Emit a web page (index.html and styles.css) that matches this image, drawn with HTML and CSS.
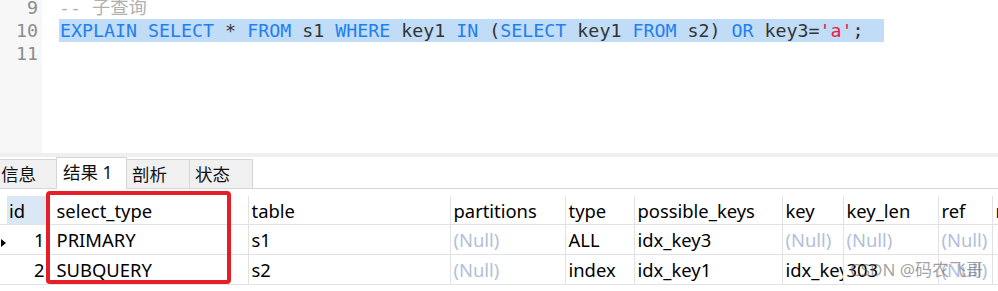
FILE: index.html
```html
<!DOCTYPE html>
<html lang="zh">
<head>
  <meta charset="UTF-8">
  <meta name="viewport" content="width=device-width, initial-scale=1.0">
  <title>查询编辑器</title>
  <link rel="stylesheet" href="styles.css">
</head>
<body>
  <div class="editor">
    <div class="gutter">
      <div class="ln">9</div>
      <div class="ln">10</div>
      <div class="ln">11</div>
    </div>
    <div class="code">
      <div class="line"><span class="cm">-- 子查询</span></div>
      <div class="line"><span class="sel"><span class="kw">EXPLAIN</span> <span class="kw">SELECT</span> * <span class="kw">FROM</span> s1 <span class="kw">WHERE</span> key1 <span class="kw">IN</span> (<span class="kw">SELECT</span> key1 <span class="kw">FROM</span> s2) <span class="kw">OR</span> key3=<span class="str">'a'</span>;</span></div>
      <div class="line"></div>
    </div>
  </div>
  <div class="band"></div>

  <div class="results">
    <div class="tabs">
      <div class="tab first">信息</div>
      <div class="tab active">结果 1</div>
      <div class="tab">剖析</div>
      <div class="tab">状态</div>
    </div>

    <table class="grid">
      <colgroup>
        <col style="width:7px"><col style="width:39px"><col style="width:202px"><col style="width:202px">
        <col style="width:115px"><col style="width:69px"><col style="width:148px"><col style="width:61px">
        <col style="width:95px"><col style="width:54px"><col style="width:100px">
      </colgroup>
      <thead>
        <tr>
          <th class="ind"></th>
          <th class="idh">id</th>
          <th class="st">select_type</th>
          <th>table</th>
          <th>partitions</th>
          <th>type</th>
          <th>possible_keys</th>
          <th>key</th>
          <th>key_len</th>
          <th>ref</th>
          <th>rows</th>
        </tr>
      </thead>
      <tbody>
        <tr>
          <td class="ind"><svg width="5" height="8" viewBox="0 0 5 8"><path d="M0 0 L5 4 L0 8 Z" fill="#000"/></svg></td>
          <td class="num">1</td>
          <td class="st">PRIMARY</td>
          <td>s1</td>
          <td class="null">(Null)</td>
          <td>ALL</td>
          <td>idx_key3</td>
          <td class="null">(Null)</td>
          <td class="null">(Null)</td>
          <td class="null">(Null)</td>
          <td class="num">9688</td>
        </tr>
        <tr>
          <td class="ind"></td>
          <td class="num">2</td>
          <td class="st">SUBQUERY</td>
          <td>s2</td>
          <td class="null">(Null)</td>
          <td>index</td>
          <td>idx_key1</td>
          <td>idx_key1</td>
          <td>303</td>
          <td class="null">(Null)</td>
          <td class="num">9954</td>
        </tr>
      </tbody>
    </table>

    <div class="mark"></div>
    <div class="watermark">CSDN @码农飞哥</div>
  </div>
</body>
</html>
```

FILE: styles.css
```css
body {
  margin: 0;
  width: 998px;
  height: 291px;
  overflow: hidden;
  background: white;
  font-family: "Noto Sans", "Noto Sans CJK SC", sans-serif;
}

/* editor */
.editor {
  display: flex;
  height: 153px;
  overflow: hidden;
  font-family: "DejaVu Sans Mono", "Noto Sans CJK SC", monospace;
  font-size: 18.3px;
}
.gutter {
  width: 42px;
  background-color: #f7f7f7;
  color: #8c8c8c;
  text-align: right;
  padding-right: 4px;
  box-sizing: border-box;
}
.ln, .line {
  height: 23px;
  line-height: 23px;
  white-space: pre;
}
.gutter .ln:first-child,
.code .line:first-child {
  margin-top: -4px;
}
.code {
  padding-left: 17px;
  color: #333;
}
.sel {
  display: inline-block;
  background-color: #c1dcf6;
  padding: 0 20px 0 1px;
}
.kw { color: #1f7fef; }
.str { color: #ec1849; }
.cm { color: #b0b0b0; }

.band {
  height: 4px;
  background-color: #efefef;
}

/* result panel */
.results {
  position: relative;
}
.tabs {
  display: flex;
  align-items: flex-end;
  height: 31px;
  border-bottom: 1px solid #d6d6d6;
}
.tab {
  box-sizing: border-box;
  height: 29px;
  line-height: 28px;
  min-width: 64px;
  padding: 0 5px;
  background-color: #f0f0f0;
  border: 1px solid #d6d6d6;
  border-bottom: none;
  font-size: 17.5px;
  color: #111;
  margin-right: -1px;
}
.tab.first {
  margin-left: -9px;
  width: 66px;
  padding: 0 0 0 9px;
}
.tab.active {
  height: 32px;
  line-height: 29px;
  width: 71px;
  background: white;
  position: relative;
  margin-bottom: -1px;
  padding: 0 0 0 6px;
  z-index: 1;
}

.grid {
  margin-top: 7px;
  table-layout: fixed;
  border-collapse: collapse;
  width: 1092px;
  font-size: 18.4px;
  color: #000;
}
.grid th, .grid td {
  height: 29px;
  padding: 0 3px;
  text-align: left;
  font-weight: normal;
  white-space: nowrap;
  overflow: hidden;
  border-right: 1px solid #e2e2e2;
  border-bottom: 1px solid #e2e2e2;
}
.grid th {
  height: 28px;
}
.grid .ind {
  padding: 0 0 0 1px;
  border-right: none;
}
.grid .idh {
  background-color: #dae8f6;
  padding-left: 2px;
}
.grid .st {
  padding-left: 10px;
}
.grid .num {
  text-align: right;
  padding-right: 1px;
}
.grid .null {
  color: #b3bfd9;
}

.mark {
  position: absolute;
  left: 46px;
  top: 34px;
  width: 185px;
  height: 93px;
  box-sizing: border-box;
  border: 4px solid #e61e28;
  border-radius: 4px;
}
.watermark {
  position: absolute;
  left: 850px;
  top: 101px;
  font-size: 17px;
  line-height: 24px;
  color: rgba(100, 100, 100, 0.6);
  white-space: nowrap;
}
```
